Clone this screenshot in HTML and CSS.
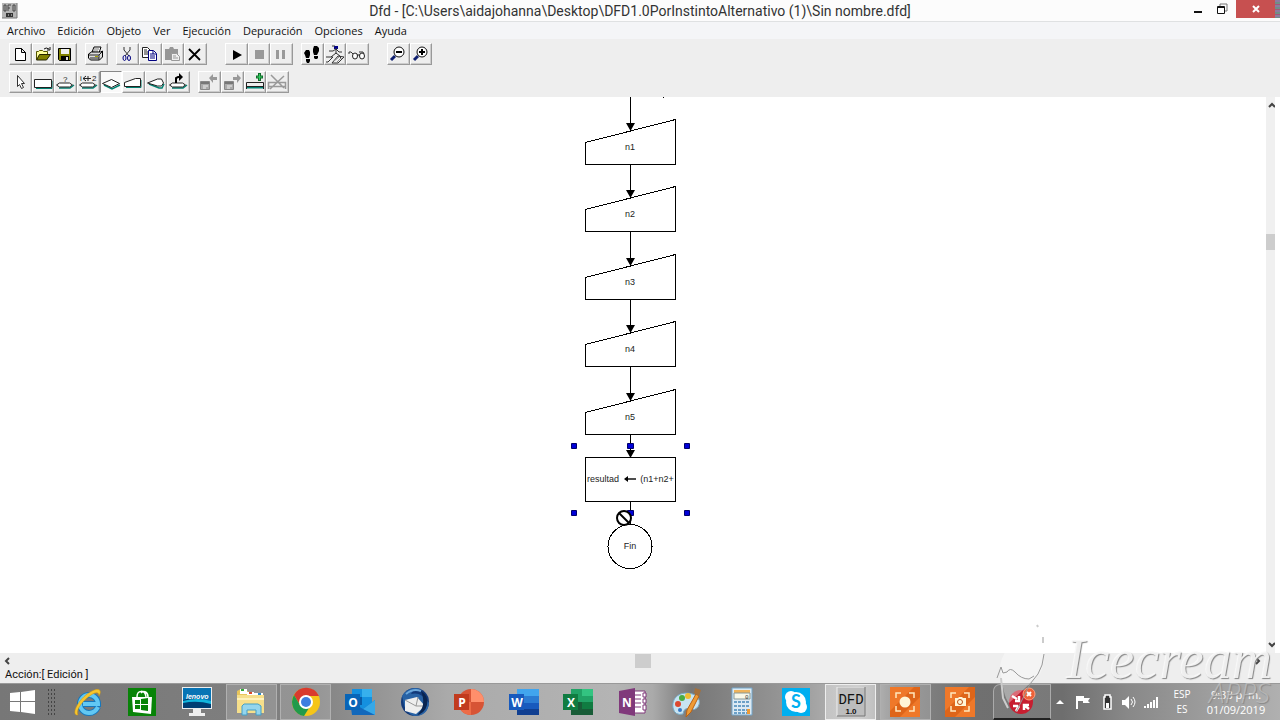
FILE: index.html
```html
<!DOCTYPE html>
<html lang="es">
<head>
  <meta charset="UTF-8">
  <meta name="viewport" content="width=device-width, initial-scale=1.0">
  <title>Dfd - Sin nombre.dfd</title>
  <link rel="stylesheet" href="styles.css">
</head>
<body>

  <div class="window">
    <header class="titlebar">
      <svg class="app-icon" width="16" height="16" viewBox="0 0 16 16"><path d="M0 0h15v15H0z" fill="#b5b5b5"/><path d="M15 0v15H0" fill="none" stroke="#777"/><path d="M2 2v6h2V2zM6 8V2h3M6 5h2M11 2v6h2V2z" fill="none" stroke="#444"/><path d="M4 10h7v4H4z" fill="#333"/><path d="M6 12h1M9 12h1" stroke="#ddd"/></svg>
      <h1>Dfd - [C:\Users\aidajohanna\Desktop\DFD1.0PorInstintoAlternativo (1)\Sin nombre.dfd]</h1>
      <div class="window-buttons">
        <button aria-label="Minimizar"><svg width="12" height="12" viewBox="0 0 12 12"><path d="M2 9h8" stroke="#111" stroke-width="2"/></svg></button>
        <button aria-label="Restaurar"><svg width="12" height="12" viewBox="0 0 12 12"><path d="M4 3V1h7v7H9" fill="none" stroke="#777"/><path d="M1.500 3.500h7v7h-7zM1 4.500h8" fill="#fff" stroke="#111"/></svg></button>
        <button class="close" aria-label="Cerrar"><svg width="12" height="12" viewBox="0 0 12 12"><path d="M3 3l6 6M9 3l-6 6" stroke="#fff" stroke-width="2"/></svg></button>
        <div class="screen-edge"></div>
      </div>
    </header>

    <nav class="menu">
      <button>Archivo</button>
      <button>Edición</button>
      <button>Objeto</button>
      <button>Ver</button>
      <button>Ejecución</button>
      <button>Depuración</button>
      <button>Opciones</button>
      <button>Ayuda</button>
    </nav>

    <div class="toolbars">
      <div class="toolbar">
        <div class="group three">
          <button aria-label="Nuevo"><svg viewBox="0 0 22 22"><path d="M6.500 5.500h6l4 4v8h-10zM12.500 5.500v4h4" fill="#fff" stroke="#000"/></svg></button>
          <button aria-label="Abrir"><svg viewBox="0 0 22 22"><path d="M4.500 16.500v-8h2l1-1h3l1 1h4v3" fill="#ffff9c" stroke="#555500"/><path d="M4.500 17l3-5.500h11l-4 5.500z" fill="#808000" stroke="#222200"/><path d="M12 6q2-2 5 0m1-2v3h-3" fill="none" stroke="#111"/></svg></button>
          <button aria-label="Guardar"><svg viewBox="0 0 22 22"><path d="M4.500 5.500h12v12h-11l-1-1z" fill="#808000" stroke="#000"/><path d="M7 6h8v5H7z" fill="#eee"/><path d="M7 13h8v4H7z" fill="#000"/><path d="M12 14h2v3h-2z" fill="#ddd"/></svg></button>
        </div>
        <div class="group one">
          <button aria-label="Imprimir"><svg viewBox="0 0 22 22"><path d="M7 9l2-5h7l-2 6z" fill="#fff" stroke="#000"/><path d="M9 6h5M8 8h5" stroke="#777"/><path d="M3.500 11l3-2h9l2-1v6l-3 3h-9l-2-2z" fill="#ddd" stroke="#000"/><path d="M4 12h10l3-3M5 15h9M14 12v5" fill="none" stroke="#222"/><path d="M10 13.500h3" stroke="#a5a500"/></svg></button>
        </div>
        <div class="group four">
          <button aria-label="Cortar"><svg viewBox="0 0 22 22"><path d="M8 4v3l5 6M14 4v3l-5 6" fill="none" stroke="#333"/><ellipse cx="8.500" cy="15" rx="1.500" ry="2.500" fill="none" stroke="#000080"/><ellipse cx="13" cy="15" rx="1.500" ry="2.500" fill="none" stroke="#000080"/></svg></button>
          <button aria-label="Copiar"><svg viewBox="0 0 22 22"><path d="M3.500 4.500h5l3 3v7h-8z" fill="#fff" stroke="#222"/><path d="M5 7h3M5 9h4M5 11h4" stroke="#222"/><path d="M9.500 7.500h5l3 3v7h-8z" fill="#fff" stroke="#000080"/><path d="M14 8v3h3M11 11h3M11 13h5M11 15h5" fill="none" stroke="#000080"/></svg></button>
          <button aria-label="Pegar"><svg viewBox="0 0 22 22"><path d="M3 6h4l1-2h3l1 2h4v11H3z" fill="#969696"/><path d="M9.500 10.500h5l3 3v4h-8z" fill="#eee" stroke="#999"/><path d="M11 13h3M11 15h5" stroke="#999"/></svg></button>
          <button aria-label="Eliminar"><svg viewBox="0 0 22 22"><path d="M5 6l11 11M16 6L5 17" fill="none" stroke="#000" stroke-width="1.800"/></svg></button>
        </div>
        <div class="group three wide">
          <button aria-label="Ejecutar"><svg viewBox="0 0 22 22"><path d="M8 7l9 5-9 5z" fill="#000"/></svg></button>
          <button aria-label="Detener"><svg viewBox="0 0 22 22"><path d="M7 7h9v9H7z" fill="#999"/></svg></button>
          <button aria-label="Pausar"><svg viewBox="0 0 22 22"><path d="M6 7h3v9H6zM12 7h3v9h-3z" fill="#999"/></svg></button>
        </div>
        <div class="group three">
          <button aria-label="Paso simple"><svg viewBox="0 0 22 22"><path d="M5 7h3l1 2v3l-1 3H5l-1-3-1-2zM5 16h4v2l-1 2H6l-1-2zM13 3h3l2 2v3l-2 4h-3l-1-3V6zM13 13h4v2l-1 1h-2l-1-1z" fill="#000"/></svg></button>
          <button aria-label="Correr"><svg viewBox="0 0 22 22"><path d="M10 3h4v3h-4z" fill="#00008c"/><path d="M8 3h3M12 5v6M5 8h4l3-2 3 3h3M12 10l-5 4M12 10l4 3 1 3M2 14h7l-5 5H2M8 20l6-7 6 1-6 6z" fill="none" stroke="#333"/><path d="M10 18l5-4M13 19l4-4" stroke="#888"/></svg></button>
          <button aria-label="Evaluar"><svg viewBox="0 0 22 22"><path d="M3 11V9h2l2 2M13 9h4l1 2" fill="none" stroke="#333"/><ellipse cx="9" cy="13" rx="2.500" ry="3" fill="#fff" stroke="#222"/><ellipse cx="16" cy="13" rx="2.500" ry="3" fill="#fff" stroke="#222"/><path d="M11 12h3" stroke="#222"/></svg></button>
        </div>
        <div class="group two wide">
          <button aria-label="Alejar"><svg viewBox="0 0 22 22"><path d="M8 13l-4 4" stroke="#102070" stroke-width="3"/><circle cx="12" cy="9" r="5" fill="#fff" stroke="#111"/><path d="M9 9h6" stroke="#000" stroke-width="2"/></svg></button>
          <button aria-label="Acercar"><svg viewBox="0 0 22 22"><path d="M8 13l-4 4" stroke="#102070" stroke-width="3"/><circle cx="12" cy="9" r="5" fill="#fff" stroke="#111"/><path d="M9 9h6M12 6v6" stroke="#000" stroke-width="2"/></svg></button>
        </div>
      </div>

      <div class="toolbar">
        <div class="group eight">
          <button aria-label="Cursor"><svg viewBox="0 0 22 22"><path d="M8.500 4.500v11l2-2 2 4 2-1-2-4h3z" fill="#fff" stroke="#333"/></svg></button>
          <button aria-label="Asignación"><svg viewBox="0 0 22 22"><path d="M4 17.500h16V10" fill="none" stroke="#008070"/><path d="M2.500 8.500h17v8h-17z" fill="#fff" stroke="#222"/></svg></button>
          <button aria-label="Mientras"><svg viewBox="0 0 22 22"><text x="9" y="11" class="tiny">?</text><path d="M5 17h11l4-3" fill="none" stroke="#008070" stroke-width="1.500"/><path d="M2.500 14l3-2h10l3 2-3 2h-10z" fill="#fff" stroke="#222"/></svg></button>
          <button aria-label="Para"><svg viewBox="0 0 22 22"><text x="3" y="10" class="tiny">i</text><text x="15" y="10" class="tiny">2</text><path d="M6 7.500h8M9 5l-3 2.500L9 10M11 5v5" fill="none" stroke="#222"/><path d="M5 17h11l4-3" fill="none" stroke="#008070" stroke-width="1.500"/><path d="M2.500 14l3-2h10l3 2-3 2h-10z" fill="#fff" stroke="#222"/></svg></button>
          <button class="pressed" aria-label="Decisión"><svg viewBox="0 0 22 22"><path d="M4 14l8 4 8-4" fill="none" stroke="#008070" stroke-width="1.500"/><path d="M2.500 12.500l9-4 8 4-8 4z" fill="#fff" stroke="#222"/></svg></button>
          <button aria-label="Lectura"><svg viewBox="0 0 22 22"><path d="M4 16.500h15V9" fill="none" stroke="#008070"/><path d="M2.500 15.500v-4l11-4h5v8z" fill="#fff" stroke="#222"/></svg></button>
          <button aria-label="Salida"><svg viewBox="0 0 22 22"><path d="M4 13l10 4h3l2-4" fill="none" stroke="#008070" stroke-width="1.500"/><path d="M2.500 12l10-4h4l2 4-2 3h-4z" fill="#fff" stroke="#222"/></svg></button>
          <button aria-label="Llamada"><svg viewBox="0 0 22 22"><path d="M5 17h11l4-3" fill="none" stroke="#008070" stroke-width="1.500"/><path d="M2.500 14l3-2h10l3 2-3 2h-10z" fill="#fff" stroke="#222"/><path d="M9 12V7l2-1h3" fill="none" stroke="#000" stroke-width="2"/><path d="M12 2l4 4-4 4z" fill="#000"/></svg></button>
        </div>
        <div class="group four">
          <button aria-label="Subprograma anterior"><svg viewBox="0 0 22 22"><path d="M11 7l4-4v3h4v3h-4v3z" fill="#999"/><path d="M2.500 10.500h9v8h-9z" fill="#aaa" stroke="#888"/><path d="M3 12h8" stroke="#777" stroke-width="2"/><path d="M5 15h5M5 17h3" stroke="#eee"/></svg></button>
          <button aria-label="Subprograma siguiente"><svg viewBox="0 0 22 22"><path d="M20 7l-4-4v3h-4v3h4v3z" fill="#999"/><path d="M3.500 10.500h9v8h-9z" fill="#aaa" stroke="#888"/><path d="M4 12h8" stroke="#777" stroke-width="2"/><path d="M6 15h5M6 17h3" stroke="#eee"/></svg></button>
          <button aria-label="Nuevo subprograma"><svg viewBox="0 0 22 22"><path d="M3 16.500h17" stroke="#008070" stroke-width="2"/><path d="M2.500 18v-6.500h17V18M3 15.500h16" fill="none" stroke="#222"/><path d="M15.500 2v8M12 6h7" stroke="#126b2c" stroke-width="3"/><path d="M15.500 3v6M13 6h5" stroke="#32d060"/></svg></button>
          <button aria-label="Eliminar subprograma"><svg viewBox="0 0 22 22"><path d="M2.500 18v-6.500h17V18M2 15.500h17M5 4l13 13M18 5L4 18" fill="none" stroke="#999" stroke-width="1.500"/></svg></button>
        </div>
      </div>
    </div>

    <main class="workspace">
      <div class="canvas">
        <svg class="flowchart" width="126" height="480" viewBox="570 97 126 480">
          <g class="line">
            <path d="M630.500 97V124M630.500 165V191M630.500 232V259M630.500 300V326M630.500 367V394M630.500 435V451M630.500 502V525M663 97h1"/>
            <path d="M585.500 142.500L675.500 119.500V164.500H585.500Z"/>
            <path d="M585.500 209.500L675.500 186.500V231.500H585.500Z"/>
            <path d="M585.500 277.500L675.500 254.500V299.500H585.500Z"/>
            <path d="M585.500 344.500L675.500 321.500V366.500H585.500Z"/>
            <path d="M585.500 412.500L675.500 389.500V434.500H585.500Z"/>
            <path d="M585.500 457.500H675.500V501.500H585.500Z"/>
            <circle cx="630" cy="546.500" r="22"/>
          </g>
          <path d="M626 123h9l-4 7h-1zM626 190h9l-4 7h-1zM626 258h9l-4 7h-1zM626 325h9l-4 7h-1zM626 393h9l-4 7h-1zM626 450h9l-4 7h-1z"/>
          <g class="label">
            <text x="630" y="150">n1</text>
            <text x="630" y="217">n2</text>
            <text x="630" y="285">n3</text>
            <text x="630" y="352">n4</text>
            <text x="630" y="420">n5</text>
            <text x="603" y="482">resultad</text>
            <text x="657" y="482">(n1+n2+</text>
            <text x="630" y="549">Fin</text>
          </g>
          <path d="M626 479h10" stroke="#000" stroke-width="1.400"/>
          <path d="M624 479l4-3v6z"/>
          <path class="handle" d="M571.500 443.500h5v5h-5zM627.500 443.500h6v5h-6zM684.500 443.500h5v5h-5zM571.500 510.500h5v5h-5zM627.500 510.500h6v5h-6zM684.500 510.500h5v5h-5z"/>
          <circle cx="624" cy="518" r="7" fill="#fff" stroke="#000" stroke-width="2"/>
          <path d="M619 513l10 10" stroke="#000" stroke-width="2"/>
        </svg>
      </div>
      <div class="scroll-v">
        <svg width="9" height="10" viewBox="0 0 9 10"><path d="M3 7l3-3 3 3" fill="none" stroke="#444" stroke-width="2"/></svg>
        <div class="thumb-v"></div>
        <svg width="9" height="10" viewBox="0 0 9 10"><path d="M3 3l3 3 3-3" fill="none" stroke="#444" stroke-width="2"/></svg>
      </div>
    </main>
    <div class="scroll-h">
      <svg width="10" height="10" viewBox="0 0 10 10"><path d="M7 2L4 5l3 3" fill="none" stroke="#444" stroke-width="2"/></svg>
      <div class="thumb-h"></div>
      <svg width="10" height="10" viewBox="0 0 10 10"><path d="M3 2l3 3-3 3" fill="none" stroke="#444" stroke-width="2"/></svg>
    </div>
    <div class="status">Acción:[ Edición ]</div>
  </div>

  <footer class="taskbar">
    <button class="start" aria-label="Inicio"><svg width="26" height="26" viewBox="0 0 26 26"><path d="M0 4l10-1v9H0zM11 3l14-2v11H11zM0 13h10v10L0 22zM11 13h14v12l-14-2z" fill="#fff"/></svg></button>
    <div class="grip"></div>
    <div class="tasks">
      <button aria-label="Internet Explorer"><svg viewBox="0 0 30 30"><path d="M25 20q-3 6-9 6a9 9 0 1 1 9-9H10" fill="none" stroke="#1678bd" stroke-width="6"/><path d="M25 20q-3 6-9 6a9 9 0 1 1 9-9H10" fill="none" stroke="#62c8f3" stroke-width="4"/><path d="M5 28C-3 29 5 11 19 4c8-4 10 0 7 5 0-6-6-3-12 2C7 17 3 24 5 28z" fill="#f7c52d" stroke="#c99412" stroke-width=".5"/></svg></button>
      <button aria-label="Tienda"><svg viewBox="0 0 30 30"><path d="M1 1h28v28H1z" fill="#088308"/><path d="M5 10h20l-1 17-18-2z" fill="#fff"/><path d="M10 10c0-7 8-8 9 0M14 6c3-3 7-1 7 4" fill="none" stroke="#fff" stroke-width="1.500"/><path d="M8 13h5v4H8zM14 12l7-1v6h-7zM8 18h5v4H8zM14 18h7v6l-7-1z" fill="#088308"/></svg></button>
      <button aria-label="Lenovo"><svg viewBox="0 0 30 30"><path d="M0 0h30v22H0z" fill="#eee"/><path d="M1 1h28v20H1z" fill="#0874b5"/><path d="M1 13q14-5 28 4v4H1z" fill="#003e73"/><path d="M1 14q14-4 28 0v3q-14-4-28-1z" fill="#12b6dd"/><text x="4" y="12" class="lenovo">lenovo</text><path d="M11 22h8v4h4v3H7v-3h4z" fill="#eee"/></svg></button>
      <button class="open" aria-label="Explorador de archivos"><svg viewBox="0 0 30 30"><path d="M1 4l4-2 7 2 1 3 12-1 3 3v16H1z" fill="#e8c55b"/><path d="M4 2h7v5H4zM11 5h7v5h-7zM18 6h9v5h-9z" fill="#fff"/><path d="M5 2h3v2H5z" fill="#31a936"/><path d="M13 5h3v2h-3z" fill="#db4a2b"/><path d="M22 6h3v2h-3z" fill="#298acb"/><path d="M1 8h27v18H1z" fill="#f6df8b"/><path d="M1 12h27" stroke="#fff2ba" stroke-width="2"/><path d="M6 28v-9l2-2h14l3 2v9h-5v-5h-9v5z" fill="#94d5ed" stroke="#429fc7"/></svg></button>
      <button class="open" aria-label="Chrome"><svg viewBox="0 0 30 30"><circle cx="15" cy="15" r="14" fill="#f5c518"/><path d="M3 8A14 14 0 0 1 28 9H15l-6 9z" fill="#d93a2e"/><path d="M3 8l6 10q3 4 9 3l-5 8A14 14 0 0 1 3 8z" fill="#219a4b"/><circle cx="15" cy="15" r="7" fill="#fff"/><circle cx="15" cy="15" r="5" fill="#3e7de0"/></svg></button>
      <button aria-label="Outlook"><svg viewBox="0 0 30 30"><path d="M7 2h20v25H7z" fill="#1490df"/><path d="M17 2h10v8H17z" fill="#37b0ed"/><path d="M7 10h10v8H7z" fill="#0a5aa6"/><path d="M5 14l13 8L30 13v15H7z" fill="#1268bb"/><path d="M18 22l12-9v15z" fill="#36a8e8"/><path d="M0 7h15v16H0z" fill="#0865b7"/><text x="8" y="20" class="letter">O</text></svg></button>
      <button aria-label="Thunderbird"><svg viewBox="0 0 30 30"><circle cx="15" cy="15" r="14" fill="#123979"/><path d="M2 9q7-11 19-7-8 0-10 5 10-3 18 9-1 13-15 13Q4 25 3 13z" fill="#2862a5"/><path d="M5 13l12-3 8 9-9 8-11-3z" fill="#eee"/><path d="M5 13l11 6 2-9M16 19l9 0" fill="none" stroke="#999"/><path d="M21 4q8 5 6 14-2 8-10 10 10-9 4-24z" fill="#092450"/><path d="M6 7q7-6 15-3" fill="none" stroke="#6ca8dc" stroke-width="2"/></svg></button>
      <button aria-label="PowerPoint"><svg viewBox="0 0 30 30"><circle cx="17" cy="15" r="13" fill="#d75435"/><path d="M17 2a13 13 0 0 1 13 13H17z" fill="#ff8f6b"/><path d="M4 15h13v13A13 13 0 0 1 4 15z" fill="#ed6c47"/><path d="M0 7h15v16H0z" fill="#c13b1e"/><text x="8" y="20" class="letter">P</text></svg></button>
      <button aria-label="Word"><svg viewBox="0 0 30 30"><path d="M8 2h22v7H8z" fill="#41a5ee"/><path d="M8 9h22v7H8z" fill="#2b7cd3"/><path d="M8 16h22v6H8z" fill="#185abd"/><path d="M8 22h22v6H8z" fill="#103f91"/><path d="M0 7h15v16H0z" fill="#185abd"/><text x="8" y="20" class="letter">W</text></svg></button>
      <button aria-label="Excel"><svg viewBox="0 0 30 30"><path d="M8 2h11v13H8z" fill="#21a366"/><path d="M19 2h11v7H19z" fill="#33c481"/><path d="M19 9h11v6H19z" fill="#21a366"/><path d="M8 15h22v13H8z" fill="#185c37"/><path d="M19 15h11v7H19z" fill="#107c41"/><path d="M0 7h15v16H0z" fill="#107c41"/><text x="8" y="20" class="letter">X</text></svg></button>
      <button aria-label="OneNote"><svg viewBox="0 0 30 30"><path d="M14 4h13v22H14z" fill="#fff" stroke="#80397b"/><path d="M25 6h3v4h-3zM25 12h3v4h-3zM25 18h3v5h-3z" fill="#fff" stroke="#80397b"/><path d="M17 8h6M17 12h6M17 16h6M17 20h6" stroke="#80397b"/><path d="M1 4l16-3v28L1 26z" fill="#80397b"/><text x="9" y="20" class="letter">N</text></svg></button>
      <button aria-label="Paint"><svg viewBox="0 0 30 30"><path d="M1 21C-1 8 12 3 23 8q7 5 3 12-3 4-8 2-6-2-7 5-8 2-10-6z" fill="#c8e4f2" stroke="#75a8c4"/><circle cx="6" cy="17" r="3" fill="#dc4930"/><circle cx="10" cy="11" r="3" fill="#4aac43"/><circle cx="16" cy="9" r="3" fill="#f0bc31"/><circle cx="8" cy="23" r="2" fill="#3579c9"/><path d="M24 7l3 2-8 16-5 5 1-7z" fill="#ee9c36" stroke="#ba6315"/><path d="M22 6l1-5 3 1 3 1-2 6z" fill="#a5713c"/></svg></button>
      <button aria-label="Calculadora"><svg viewBox="0 0 30 30"><path d="M5 1h20v27H5z" fill="#dceaf3" stroke="#73a5ca"/><path d="M7 3h16v3H7z" fill="#efb45b"/><path d="M7 6h16v6H7z" fill="#f8f8e8" stroke="#899"/><text x="18" y="12" class="calc">0</text><path d="M7 15h16M7 19h16M7 23h16M7 26h16" stroke="#6ba0c7" stroke-width="2" stroke-dasharray="3 1"/><path d="M20 22h3v5h-3z" fill="#ee9b35"/></svg></button>
      <button aria-label="Skype"><svg viewBox="0 0 30 30"><path d="M1 1h28v28H1z" fill="#00aff0"/><circle cx="15" cy="15" r="10" fill="#fff"/><circle cx="10" cy="10" r="6" fill="#fff"/><circle cx="20" cy="20" r="6" fill="#fff"/><text x="15" y="21" class="skype">S</text></svg></button>
      <button class="open active" aria-label="Dfd"><svg viewBox="0 0 30 30"><path d="M1 0h28v29H1z" fill="#bdbdbd"/><path d="M1 29V0h28" fill="none" stroke="#eee"/><path d="M29 0v29H1" fill="none" stroke="#777"/><text x="15" y="17" class="dfd">DFD</text><text x="15" y="27" class="version">1.0</text></svg></button>
      <button class="open" aria-label="Icecream Screen Recorder"><svg viewBox="0 0 30 30"><path d="M0 0h30v30H0z" fill="#ef7829"/><path d="M0 24L24 0h6v10L10 30H0z" fill="#de6519"/><path d="M6 11V6h5M19 6h5v5M24 19v5h-5M11 24H6v-5" fill="none" stroke="#ffe7bd" stroke-width="1.500"/><circle cx="15" cy="15" r="5.500" fill="#fff5d6"/></svg></button>
      <button aria-label="Captura de pantalla"><svg viewBox="0 0 30 30"><path d="M0 0h30v30H0z" fill="#ef7829"/><path d="M0 24L24 0h6v10L10 30H0z" fill="#de6519"/><path d="M6 11V6h5M19 6h5v5M24 19v5h-5M11 24H6v-5" fill="none" stroke="#ffe7bd" stroke-width="1.500"/><path d="M10 11h3l1-1h3l1 1h3v8H10z" fill="#fff5d6"/><circle cx="15" cy="15" r="2.500" fill="none" stroke="#b95118"/></svg></button>
    </div>
    <button class="recorder" aria-label="Grabación"><svg width="32" height="32" viewBox="0 0 32 32"><circle cx="15" cy="16" r="12" fill="#c71e30"/><path d="M6 10l5 3M9 15h4v-5M7 20h5M10 25l3-5M18 24v-5h5M18 19l5 4" fill="none" stroke="#fff" stroke-width="2.500"/><circle cx="23" cy="8" r="6" fill="#ed6138" stroke="#ffa080"/><path d="M21 6l4 4M25 6l-4 4" stroke="#fff" stroke-width="2"/></svg></button>
    <div class="tray">
      <svg viewBox="0 0 18 18"><path d="M5 11l4-4 4 4z" fill="#fff"/></svg>
      <svg viewBox="0 0 18 18"><path d="M3 3v13" stroke="#fff" stroke-width="2"/><path d="M4 3h6v2h6l-2 3 2 2H9V8H4z" fill="#fff"/></svg>
      <svg viewBox="0 0 18 18"><path d="M8 4V2h5v2h1v12H7V4z" fill="#333" stroke="#fff" stroke-width="1.500"/><path d="M9 10h3v5H9z" fill="#fff"/></svg>
      <svg viewBox="0 0 18 18"><path d="M2 7h3l4-4v13l-4-4H2z" fill="#fff"/><path d="M11 6q3 3 0 6M13 4q4 5 0 10" fill="none" stroke="#fff"/></svg>
      <svg viewBox="0 0 18 18"><path d="M2 15v-2M5 15v-4M8 15V9M11 15V7M14 15V4" stroke="#fff" stroke-width="2"/></svg>
    </div>
    <div class="language">ESP<br>ES</div>
    <div class="clock">9:33 p. m.<br>01/09/2019</div>

    <div class="watermark">
      <svg width="76" height="104" viewBox="0 0 76 104"><path d="M10 50Q12 35 26 26q12-10 26-6 6 20-2 38L19 87q-6-6-9-37z" fill="#fff" opacity=".35"/><path d="M7 62l4-11 2 6 4-1q3-5 8 0 6 7 14 7l5-3M54 38q-1 12-6 20l-8 10-14 28" fill="none" stroke="#999"/><path d="M47 9l1 2M53 21v6M11 62l2 20 5 10" fill="none" stroke="#ccc" stroke-width="2"/></svg>
      <p class="brand">Icecream</p>
      <p class="apps">APPS</p>
    </div>
  </footer>

</body>
</html>
```
FILE: styles.css
```css
* { box-sizing: border-box; }
body { margin: 0; height: 100vh; display: flex; flex-direction: column; overflow: hidden; background: #fff; color: #111; font-family: "Open Sans", "Noto Sans", sans-serif; }
button { border: none; padding: 0; margin: 0; background: none; color: inherit; font: inherit; }
svg { display: block; flex: none; }
h1, p { margin: 0; font-weight: normal; }

/* Window */
.window { flex: 1; min-height: 0; display: flex; flex-direction: column; background: #eee; }
.titlebar { display: grid; grid-template-columns: 1fr auto 1fr; align-items: start; height: 22px; background: #fcfcfc; border-bottom: 1px solid #dfe1e2; }
.app-icon { margin: 3px 2px; }
.titlebar h1 { font: 14px/22px Roboto, "Open Sans", sans-serif; color: #333; }
.window-buttons { display: flex; justify-content: flex-end; }
.window-buttons button { width: 24px; height: 18px; display: flex; align-items: center; justify-content: center; }
.window-buttons .close { width: 39px; margin-left: 2px; background: #c75050; }
.screen-edge { width: 5px; height: 18px; background: repeating-linear-gradient(#8d7aa0 0 2px, #6f8f86 2px 4px, #a05a78 4px 5px); }

.menu { display: flex; gap: 12px; height: 17px; padding-left: 7px; background: #f4f5f7; font-size: 11px; line-height: 17px; }

.toolbars { height: 58px; padding: 4px 9px 0; }
.toolbar { display: flex; gap: 8px; height: 28px; }
.group { display: flex; height: 22px; }
.group.wide { margin-left: 10px; }
.one { width: 23px; }
.two { width: 45px; }
.three { width: 68px; }
.four { width: 91px; }
.eight { width: 181px; }
.group button { flex: 1; min-width: 0; height: 22px; border: 1px solid; border-color: #fff #999 #999 #fff; box-shadow: inset -1px -1px #ccc; }
.group button.pressed { background: #f9f9f9; border-color: #888 #fff #fff #888; box-shadow: none; }
.group svg { width: 22px; height: 22px; margin: -1px; }
.tiny { font: 8px "Liberation Sans", sans-serif; fill: #222; }

/* Drawing area */
.workspace { flex: 1; min-height: 0; display: flex; padding-right: 5px; background: #fff; }
.canvas { flex: 1; display: flex; justify-content: center; overflow: hidden; }
.line { fill: none; stroke: #000; shape-rendering: crispEdges; }
.label { font: 9px "Liberation Sans", Arial, sans-serif; text-anchor: middle; fill: #222; }
.handle { fill: #0000d8; stroke: #00006c; }
.scroll-v { width: 9px; padding: 3px 0; display: flex; flex-direction: column; background: #f0f0f0; }
.thumb-v { height: 16px; margin: 124px 0 auto; background: #cdcdcd; }
.scroll-h { display: flex; align-items: center; height: 15px; padding: 0 17px 0 2px; }
.thumb-h { width: 16px; height: 14px; margin: 0 auto 0 calc(50% - 8px); background: #cdcdcd; }
.status { height: 15px; padding-left: 5px; font: 11px/14px Roboto, Arial, sans-serif; }

/* Taskbar */
.taskbar { position: relative; display: flex; align-items: center; height: 37px; padding-right: 5px; background: linear-gradient(90deg, #777 0, #808080 24%, #aaa 35%, #b4b4b4 48%, #aaa 51%, #777 54%, #888 58%, #999 62%, #bbb 67%, #8a8a8a 70%, #707070 76%, #6e6e6e 83%, #888 88%, #b0b0b0 100%); color: #fff; border-top: 1px solid #999; }
.start { width: 36px; padding-left: 10px; }
.grip { width: 9px; height: 28px; margin: 0 6px 0 11px; background: radial-gradient(#444 1px, transparent 1px) 0 0 / 3px 4px; }
.tasks { flex: 1; display: flex; justify-content: space-between; height: 36px; }
.tasks button { width: 51px; height: 36px; display: flex; align-items: center; justify-content: center; }
.tasks svg { width: 30px; height: 30px; }
.tasks .open { background: rgba(255,255,255,.16); border: 1px solid #b0b0b0; }
.tasks .active { background: rgba(255,255,255,.3); border-color: #eee; }
.letter { font: bold 12px "Open Sans", sans-serif; fill: #fff; text-anchor: middle; }
.lenovo { font: italic bold 7px "Liberation Sans", sans-serif; fill: #fff; }
.calc { font: 6px "Liberation Mono", monospace; fill: #333; }
.skype { font: bold 18px Lato, sans-serif; fill: #00aff0; text-anchor: middle; }
.dfd { font: 14px "Liberation Mono", monospace; fill: #111; text-anchor: middle; }
.version { font: bold 8px "Liberation Sans", sans-serif; fill: #111; text-anchor: middle; }
.recorder { width: 58px; height: 36px; margin-left: 8px; display: flex; align-items: center; justify-content: center; border: 1px solid #aaa; border-bottom: 2px solid #222; border-radius: 7px 0 0 0; background: rgba(255,255,255,.08); }
.tray { display: flex; gap: 5px; }
.tray svg { width: 18px; height: 18px; }
.language, .clock { font-size: 11px; line-height: 15px; text-align: center; }
.language { width: 38px; margin-left: 2px; font-size: 10px; }
.clock { width: 74px; padding-right: 4px; }

/* Recorder watermark over the corner of the screen */
.watermark { position: absolute; right: 0; bottom: 0; width: 290px; height: 104px; pointer-events: none; }
.watermark p { position: absolute; color: rgba(250,250,250,.9); }
.brand { right: 8px; bottom: 44px; font: italic 56px/34px "Liberation Serif", serif; text-shadow: 1px 1px 1px #888; }
.watermark .apps { right: 10px; bottom: 16px; color: rgba(195,195,195,.7); font: italic 300 28px/24px "Open Sans", sans-serif; text-shadow: 1px 1px 1px #888; }
```
